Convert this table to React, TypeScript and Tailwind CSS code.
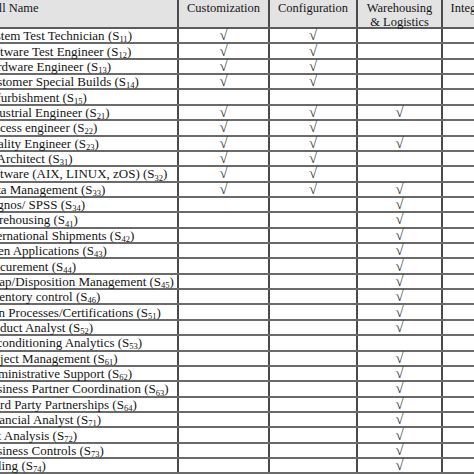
import React from 'react';

type Row = { name: string; code: string; marks: [boolean, boolean, boolean] };

const rows: Row[] = [
  { name: 'System Test Technician', code: '11', marks: [true, true, false] },
  { name: 'Software Test Engineer', code: '12', marks: [true, true, false] },
  { name: 'Hardware Engineer', code: '13', marks: [true, true, false] },
  { name: 'Customer Special Builds', code: '14', marks: [true, true, false] },
  { name: 'Refurbishment', code: '15', marks: [false, false, false] },
  { name: 'Industrial Engineer', code: '21', marks: [true, true, true] },
  { name: 'Process engineer', code: '22', marks: [true, true, false] },
  { name: 'Quality Engineer', code: '23', marks: [true, true, true] },
  { name: 'IT Architect', code: '31', marks: [true, true, false] },
  { name: 'Software (AIX, LINUX, zOS)', code: '32', marks: [true, true, false] },
  { name: 'Data Management', code: '33', marks: [true, true, true] },
  { name: 'Cognos/ SPSS', code: '34', marks: [false, false, true] },
  { name: 'Warehousing', code: '41', marks: [false, false, true] },
  { name: 'International Shipments', code: '42', marks: [false, false, true] },
  { name: 'Open Applications', code: '43', marks: [false, false, true] },
  { name: 'Procurement', code: '44', marks: [false, false, true] },
  { name: 'Scrap/Disposition Management', code: '45', marks: [false, false, true] },
  { name: 'Inventory control', code: '46', marks: [false, false, true] },
  { name: 'Plan Processes/Certifications', code: '51', marks: [false, false, true] },
  { name: 'Product Analyst', code: '52', marks: [false, false, true] },
  { name: 'Reconditioning Analytics', code: '53', marks: [false, false, false] },
  { name: 'Project Management', code: '61', marks: [false, false, true] },
  { name: 'Administrative Support', code: '62', marks: [false, false, true] },
  { name: 'Business Partner Coordination', code: '63', marks: [false, false, true] },
  { name: 'Third Party Partnerships', code: '64', marks: [false, false, true] },
  { name: 'Financial Analyst', code: '71', marks: [false, false, true] },
  { name: 'Tax Analysis', code: '72', marks: [false, false, true] },
  { name: 'Business Controls', code: '73', marks: [false, false, true] },
  { name: 'Billing', code: '74', marks: [false, false, true] },
];

const colW = ['w-[91px]', 'w-[88px]', 'w-[85px]'];

export default function App() {
  return (
    <div
      className="w-[474px] h-[474px] overflow-hidden bg-white text-[#151515]"
      style={{ fontFamily: '"Liberation Serif", "Times New Roman", serif' }}
    >
      <div className="ml-[-23px] w-[560px]">
        {/* header */}
        <div className="flex h-[29px] bg-[#e3e3e3] border-b-2 border-[#5c5c5c] leading-[14px] text-[12.5px]">
          <div className="w-[200px] shrink-0 pl-[5px] pt-[1px]">Skill Name</div>
          <div className="w-[91px] shrink-0 border-l-2 border-[#4a4a4a] text-center pt-[1px]">Customization</div>
          <div className="w-[88px] shrink-0 border-l-2 border-[#4a4a4a] text-center pt-[1px]">Configuration</div>
          <div className="w-[85px] shrink-0 border-l-2 border-[#4a4a4a] text-center pt-[1px]">
            Warehousing
            <br />& Logistics
          </div>
          <div className="w-[72px] shrink-0 border-l-2 border-[#4a4a4a] text-center pt-[1px]">Integration</div>
        </div>

        {rows.map((r) => (
          <div key={r.code} className="flex h-[15.36px] border-b-2 border-[#6a6a6a] leading-[13px] text-[13px]">
            <div className="w-[200px] shrink-0 pl-[5px] whitespace-nowrap flex items-center">
              <span>
                {r.name} (S<sub className="text-[8.5px]">{r.code}</sub>)
              </span>
            </div>
            {r.marks.map((m, i) => (
              <div
                key={i}
                className={`${colW[i]} shrink-0 border-l-2 border-[#4a4a4a] flex items-center justify-center text-[#3d3d3d] text-[15px]`}
              >
                {m ? '√' : ''}
              </div>
            ))}
            <div className="w-[72px] shrink-0 border-l-2 border-[#4a4a4a]" />
          </div>
        ))}
      </div>
    </div>
  );
}
